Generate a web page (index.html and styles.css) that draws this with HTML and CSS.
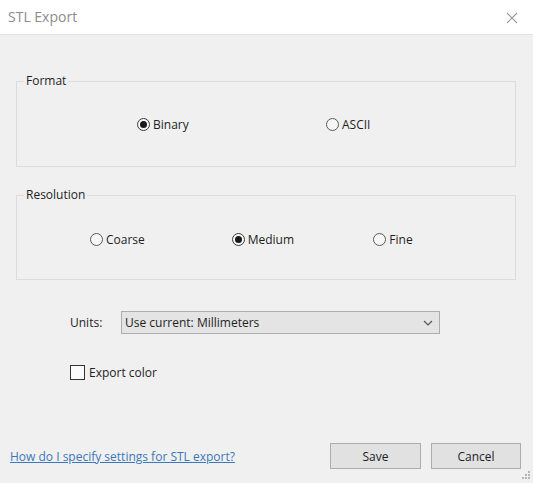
FILE: index.html
```html
<html lang="en">
	<head>
		<meta charset="UTF-8" />
		<meta name="viewport" content="width=device-width, initial-scale=1.0" />
		<title>STL Export</title>
		<link rel="stylesheet" href="styles.css">
	</head>
	<body>
		<div class="dialog">
			<div class="titlebar">
				<span class="title">STL Export</span>
				<svg class="close" width="12" height="12" viewBox="0 0 12 12">
					<path d="M1 1 L11 11 M11 1 L1 11" stroke="#9a9a9a" stroke-width="1.1" fill="none" />
				</svg>
			</div>

			<div class="content">
				<fieldset class="group format">
					<legend>Format</legend>
					<div class="options">
						<label class="option"><span class="radio checked"></span>Binary</label>
						<label class="option"><span class="radio"></span>ASCII</label>
					</div>
				</fieldset>

				<fieldset class="group resolution">
					<legend>Resolution</legend>
					<div class="options">
						<label class="option"><span class="radio"></span>Coarse</label>
						<label class="option"><span class="radio checked"></span>Medium</label>
						<label class="option"><span class="radio"></span>Fine</label>
					</div>
				</fieldset>

				<div class="units-row">
					<span class="units-label">Units:</span>
					<div class="select">
						<span>Use current: Millimeters</span>
						<svg width="10" height="6" viewBox="0 0 10 6">
							<path d="M1 1 L5 5 L9 1" stroke="#555" stroke-width="1.2" fill="none" />
						</svg>
					</div>
				</div>

				<label class="check-row"><span class="checkbox"></span>Export color</label>
			</div>

			<div class="footer">
				<a class="help" href="#">How do I specify settings for STL export?</a>
				<div class="buttons">
					<button class="btn save">Save</button>
					<button class="btn cancel">Cancel</button>
				</div>
			</div>

			<svg class="grip" width="10" height="10" viewBox="0 0 10 10">
				<rect x="7" y="1" width="2" height="2" fill="#b5b5b5" />
				<rect x="4" y="4" width="2" height="2" fill="#b5b5b5" />
				<rect x="7" y="4" width="2" height="2" fill="#b5b5b5" />
				<rect x="1" y="7" width="2" height="2" fill="#b5b5b5" />
				<rect x="4" y="7" width="2" height="2" fill="#b5b5b5" />
				<rect x="7" y="7" width="2" height="2" fill="#b5b5b5" />
			</svg>
		</div>
	</body>
</html>
```

FILE: styles.css
```css
body {
	margin: 0;
	font-family: "Open Sans", "Noto Sans", Arial, sans-serif;
	font-size: 12px;
	color: #1e1e1e;
	background: #f0f0f0;
}
.dialog {
	position: relative;
	width: 533px;
	height: 483px;
	background: #f0f0f0;
}
.titlebar {
	height: 34px;
	background: #fff;
	border-bottom: 1px solid #e3e3e3;
	display: flex;
	align-items: center;
	justify-content: space-between;
	padding: 0 15px 0 8px;
}
.title {
	font-size: 14px;
	color: #8c8c8c;
	margin-top: -1px;
}
.close {
	margin-top: 2px;
}
.content {
	padding: 38px 17px 0 16px;
}
.group {
	margin: 0;
	padding: 0;
	border: 1px solid #dcdcdc;
	min-width: 0;
}
.group legend {
	margin-left: 7px;
	padding: 0 2px;
	line-height: 16px;
	color: #1e1e1e;
}
.options {
	display: flex;
	align-items: center;
	height: 20px;
}
.option {
	display: flex;
	align-items: center;
	gap: 3px;
}
.format .options {
	padding: 25px 0 0 120px;
	height: 20px;
	margin-bottom: 32px;
}
.format .option {
	width: 190px;
}
.resolution {
	margin-top: 20px;
}
.resolution .options {
	padding: 26px 0 0 73px;
	margin-bottom: 30px;
}
.resolution .option {
	width: 142px;
}
.radio {
	width: 11px;
	height: 11px;
	border: 1.5px solid #5a5a5a;
	border-radius: 50%;
	background: #f6f6f6;
	display: inline-flex;
	align-items: center;
	justify-content: center;
}
.radio.checked {
	border-color: #3a3a3a;
}
.radio.checked::after {
	content: "";
	width: 7px;
	height: 7px;
	border-radius: 50%;
	background: #1a1a1a;
}
.units-row {
	display: flex;
	align-items: center;
	margin-top: 31px;
	padding-left: 54px;
}
.units-label {
	width: 51px;
}
.select {
	height: 21px;
	background: #e4e4e4;
	border: 1px solid #adadad;
	display: flex;
	align-items: center;
	justify-content: space-between;
	padding: 0 6px 0 3px;
	width: 308px;
}
.check-row {
	display: flex;
	align-items: center;
	gap: 4px;
	margin-top: 30px;
	margin-left: 54px;
}
.checkbox {
	width: 13px;
	height: 13px;
	border: 1px solid #333;
	background: #fbfbfb;
}
.footer {
	display: flex;
	align-items: center;
	justify-content: space-between;
	margin-top: 62px;
	padding: 0 12px 0 10px;
}
.help {
	color: #3b78b8;
	text-decoration: underline;
}
.buttons {
	display: flex;
	gap: 10px;
}
.btn {
	font-family: inherit;
	font-size: 12px;
	color: #1e1e1e;
	height: 26px;
	width: 91px;
	background: #e1e1e1;
	border: 1px solid #adadad;
	padding: 0;
}
.cancel {
	width: 90px;
}
.grip {
	position: absolute;
	right: 2px;
	bottom: 3px;
}
```
